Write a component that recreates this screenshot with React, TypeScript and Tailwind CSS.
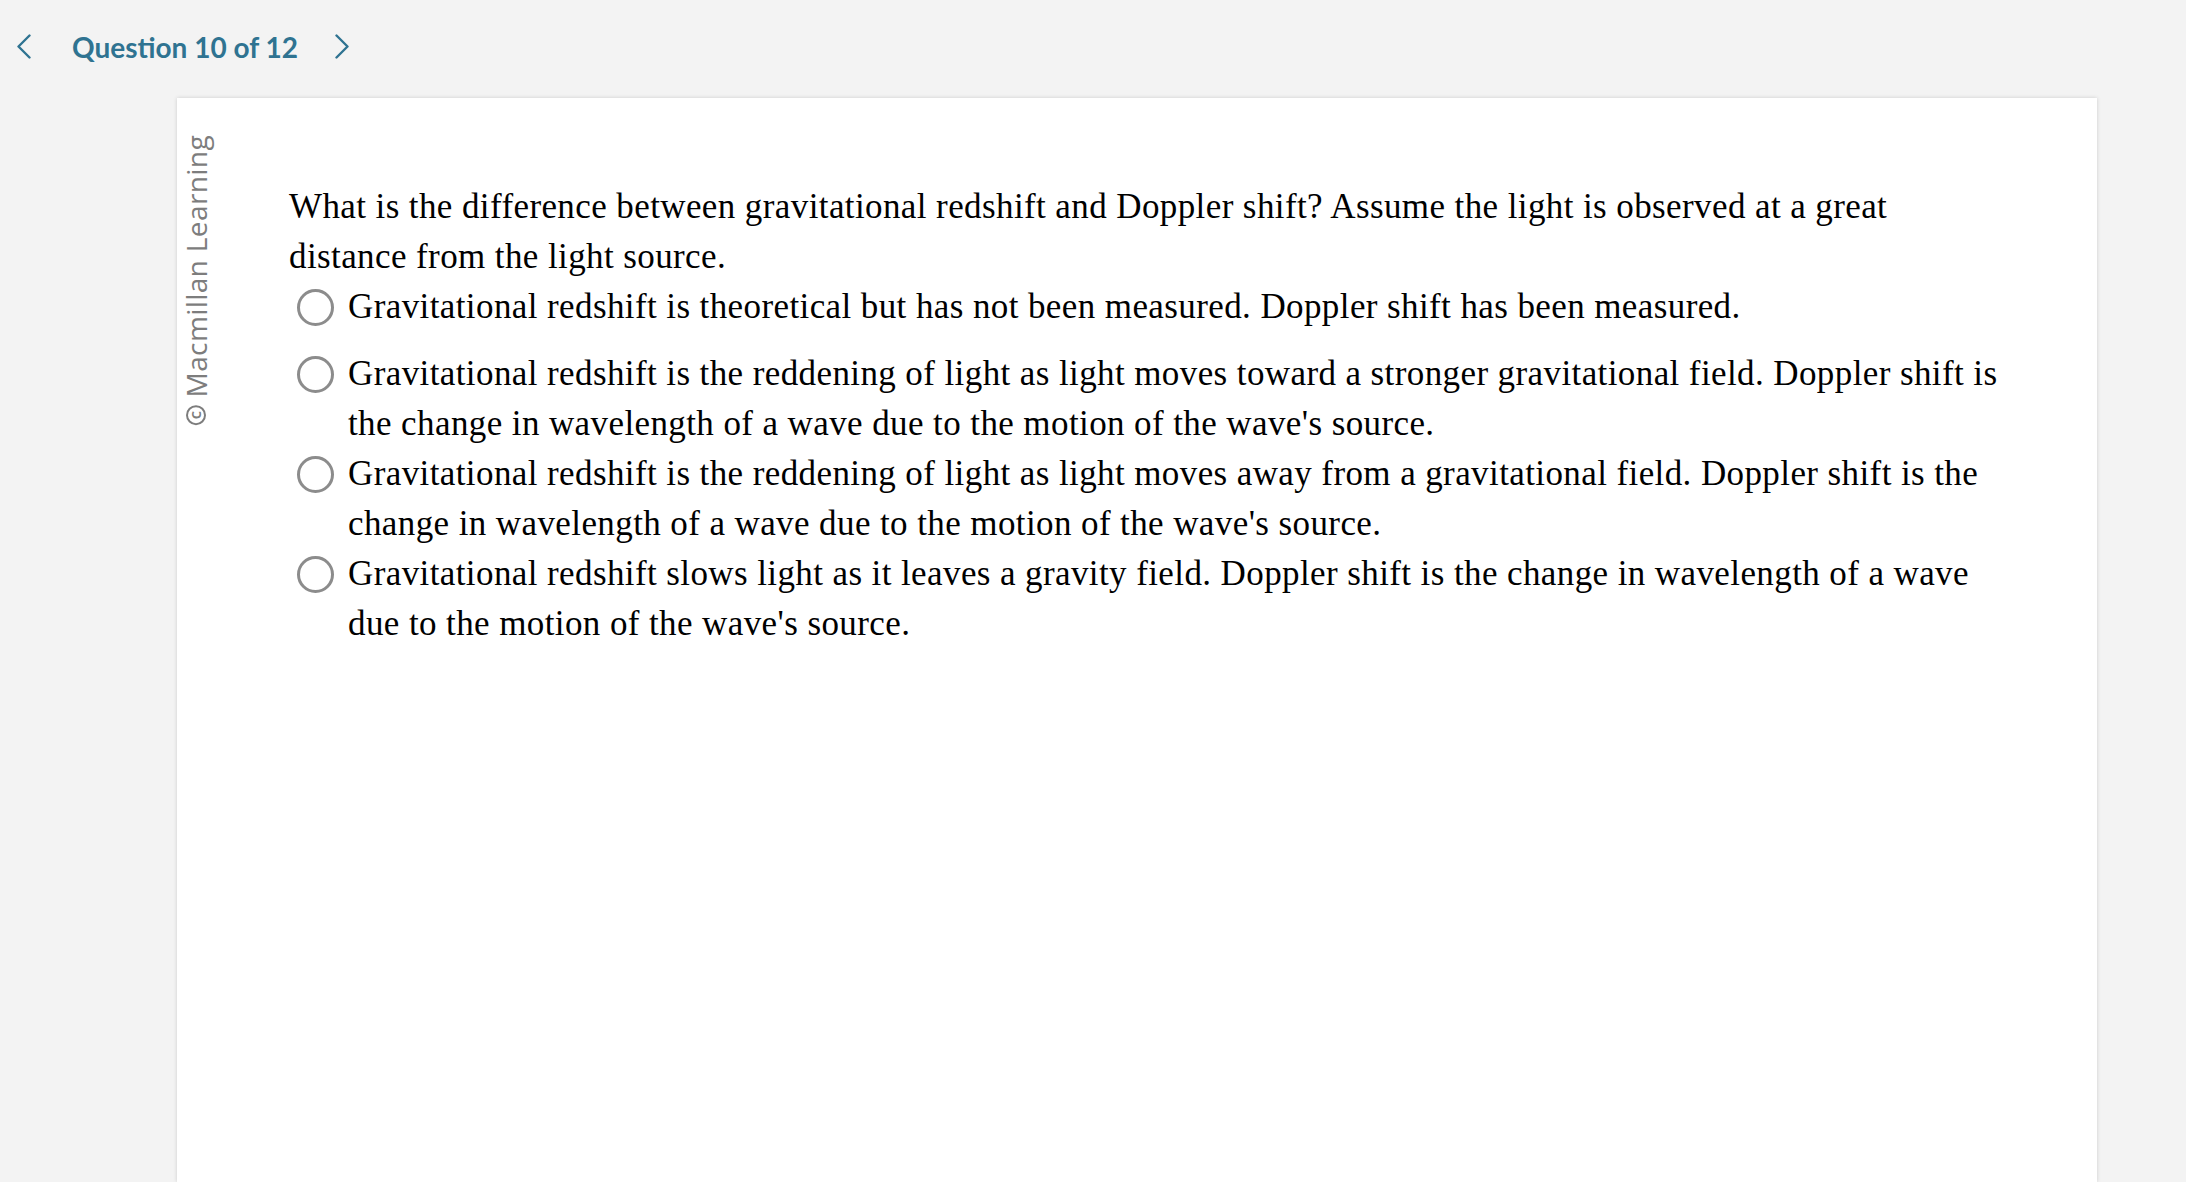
import React from 'react';

const options = [
    'Gravitational redshift is theoretical but has not been measured. Doppler shift has been measured.',
    "Gravitational redshift is the reddening of light as light moves toward a stronger gravitational field. Doppler shift is the change in wavelength of a wave due to the motion of the wave's source.",
    "Gravitational redshift is the reddening of light as light moves away from a gravitational field. Doppler shift is the change in wavelength of a wave due to the motion of the wave's source.",
    "Gravitational redshift slows light as it leaves a gravity field. Doppler shift is the change in wavelength of a wave due to the motion of the wave's source."
];

function Chevron({ dir }: { dir: 'left' | 'right' }) {
    return (
        <svg width="14" height="25" viewBox="0 0 14 25" fill="none" stroke="#2f7391" strokeWidth="2.4" strokeLinecap="round" strokeLinejoin="round">
            {dir === 'left' ? <polyline points="12.5 1.5 1.5 12.5 12.5 23.5" /> : <polyline points="1.5 1.5 12.5 12.5 1.5 23.5" />}
        </svg>
    );
}

export default function App() {
    return (
        <div className="h-screen overflow-hidden bg-[#f3f3f3] flex flex-col">
            {/* Question navigation */}
            <div className="h-[93px] flex items-center pl-[17px] shrink-0">
                <Chevron dir="left" />
                <span className="ml-[41px] font-['Lato',sans-serif] font-bold text-[28px] text-[#2f7391]">Question 10 of 12</span>
                <span className="ml-[37px] flex">
                    <Chevron dir="right" />
                </span>
            </div>

            {/* Question card */}
            <div className="mt-[5px] flex-1 ml-[177px] mr-[89px] bg-white shadow-[0_0_4px_rgba(0,0,0,0.16)] flex items-start">
                <div className="pl-[2px] pt-[37px]">
                    <div className="[writing-mode:vertical-rl] rotate-180 font-['Open_Sans',sans-serif] text-[28px] leading-[34px] tracking-[0.4px] text-[#7d7d7d] whitespace-nowrap">
                        <span className="inline-flex items-center justify-center w-[20px] h-[20px] rounded-full border-2 border-[#7d7d7d] text-[13px] font-bold leading-none tracking-normal">C</span> Macmillan Learning
                    </div>
                </div>

                <div className="flex-1 ml-[76px] mr-[92px] pt-[84px] font-['Liberation_Serif',serif] text-[35px] leading-[50px] tracking-[0.4px] text-black">
                    <p>
                        What is the difference between gravitational redshift and Doppler shift? Assume the light is observed at a great distance from the light source.
                    </p>
                    {options.map((opt, i) => (
                        <label key={i} className={`flex items-start pl-[8px] ${i === 0 ? 'mb-[17px]' : ''}`}>
                            <span className="mt-[7px] w-[37px] h-[37px] shrink-0 rounded-full border-[3px] border-[#8c8c8c]" />
                            <span className="ml-[14px]">{opt}</span>
                        </label>
                    ))}
                </div>
            </div>
        </div>
    );
}
